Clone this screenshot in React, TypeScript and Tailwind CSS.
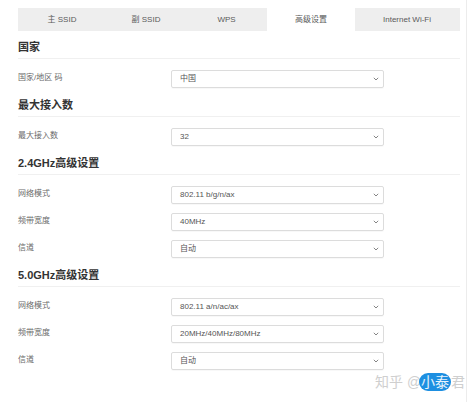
import React from "react";

const tabs = [
  { label: "主 SSID", w: "w-[88px]" },
  { label: "副 SSID", w: "w-[80px]" },
  { label: "WPS", w: "w-[81px]" },
  { label: "高级设置", w: "w-[88px]", active: true },
  { label: "Internet Wi-Fi", w: "w-[104px]" },
];

const sections = [
  { title: "国家", rows: [{ label: "国家/地区 码", value: "中国" }] },
  { title: "最大接入数", rows: [{ label: "最大接入数", value: "32" }] },
  {
    title: "2.4GHz高级设置",
    rows: [
      { label: "网络模式", value: "802.11 b/g/n/ax" },
      { label: "频带宽度", value: "40MHz" },
      { label: "信道", value: "自动" },
    ],
  },
  {
    title: "5.0GHz高级设置",
    rows: [
      { label: "网络模式", value: "802.11 a/n/ac/ax" },
      { label: "频带宽度", value: "20MHz/40MHz/80MHz" },
      { label: "信道", value: "自动" },
    ],
  },
];

function Chevron() {
  return (
    <svg width="6" height="4" viewBox="0 0 6 4" className="text-[#777]">
      <path d="M0.8 0.8 L3 3 L5.2 0.8" fill="none" stroke="currentColor" strokeWidth="0.9" />
    </svg>
  );
}

export default function App() {
  return (
    <div
      className="relative w-[474px] h-[402px] bg-white overflow-hidden"
      style={{ fontFamily: '"Liberation Sans", "Noto Sans CJK SC", sans-serif' }}
    >
      <div className="w-[467px] h-full border-r border-[#ececec] pl-[18px] pr-[6px] pt-[8px]">
        {/* Tabs */}
        <div className="flex h-[23px] bg-[#eeeeee]">
          {tabs.map((t) => (
            <div
              key={t.label}
              className={`${t.w} flex items-center justify-center text-[8px] text-[#5a5a5a] ${
                t.active ? "bg-white" : ""
              }`}
            >
              {t.label}
            </div>
          ))}
        </div>

        {sections.map((s, i) => (
          <div key={s.title} className={i === 0 ? "mt-[9px]" : "mt-[10px]"}>
            <div className="h-[15px] flex items-center text-[11px] font-bold text-[#333]">
              {s.title}
            </div>
            <div className="mt-[3px] border-t border-[#f0f0f0]" />
            <div className="mt-[11px] flex flex-col gap-[9px]">
              {s.rows.map((r) => (
                <div key={r.label + r.value} className="flex items-start">
                  <div className="w-[153px] pt-[2px] text-[8px] text-[#6a6a6a]">{r.label}</div>
                  <div className="w-[213px] h-[18px] flex items-center justify-between border border-[#dcdcdc] rounded-[2px] pl-[8px] pr-[4px] text-[8px] text-[#555] shadow-[0_1px_1px_rgba(0,0,0,0.03)]">
                    <span>{r.value}</span>
                    <Chevron />
                  </div>
                </div>
              ))}
            </div>
          </div>
        ))}
      </div>

      {/* watermark */}
      <div className="absolute left-[375px] top-[373px] flex items-center text-[14px] text-[#cfcfcf] leading-none">
        <span>知乎 @</span>
        <span className="bg-[#1d8fe1] text-white/90 rounded-full px-[2px] py-[2px] -ml-[2px]">小泰</span>
        <span>君</span>
      </div>
    </div>
  );
}
